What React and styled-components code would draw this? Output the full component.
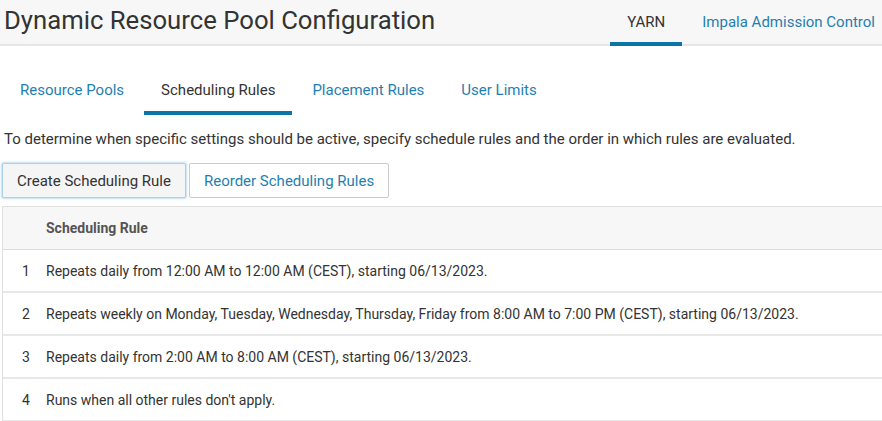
import React from 'react';
import styled, { createGlobalStyle } from 'styled-components';

const GlobalStyle = createGlobalStyle`
  body {
    margin: 0;
    background: #fff;
    font-family: Roboto, 'Liberation Sans', sans-serif;
    color: #333;
  }
`;

const blue = '#1f7fb0';
const accent = '#0c75a8';

const Page = styled.div`
  width: 882px;
  overflow: hidden;
`;

const Header = styled.header`
  display: flex;
  align-items: stretch;
  height: 44px;
  background: #f7f7f7;
  border-bottom: 2px solid #e6e6e6;
`;

const Title = styled.h1`
  flex: 1;
  margin: 0;
  padding-left: 4px;
  font-size: 25.7px;
  font-weight: 400;
  line-height: 40px;
  color: #333;
  white-space: nowrap;
`;

const TopNav = styled.nav`
  display: flex;
  align-items: stretch;
`;

const TopTab = styled.a`
  display: flex;
  align-items: center;
  padding: 2px 17px 0;
  margin-bottom: -2px;
  font-size: 15px;
  white-space: nowrap;
  color: ${p => (p.active ? '#333' : blue)};
  border-bottom: 4px solid ${p => (p.active ? accent : 'transparent')};
  &:last-child {
    padding: 2px 7px 0 20px;
  }
`;

const SubNav = styled.nav`
  display: flex;
  gap: 3px;
  padding-left: 3px;
`;

const SubTab = styled.a`
  padding: 34px 17px 11px;
  font-size: 15px;
  line-height: 20px;
  white-space: nowrap;
  color: ${p => (p.active ? '#333' : blue)};
  border-bottom: 4px solid ${p => (p.active ? accent : 'transparent')};
`;

const Intro = styled.p`
  margin: 14px 0 0 4px;
  font-size: 15px;
  line-height: 20px;
  color: #333;
`;

const Toolbar = styled.div`
  display: flex;
  gap: 3px;
  margin: 14px 0 0 2px;
`;

const Button = styled.button`
  height: 35px;
  padding: 0 14px;
  font-family: inherit;
  font-size: 15px;
  border-radius: 2px;
  cursor: pointer;
  color: ${p => (p.primary ? '#333' : blue)};
  background: ${p => (p.primary ? '#f5f5f5' : '#fff')};
  border: 1px solid ${p => (p.primary ? '#a9d2e8' : '#cccccc')};
  box-shadow: ${p => (p.primary ? '0 0 2px 1px rgba(120, 185, 220, 0.45)' : 'none')};
`;

const Table = styled.div`
  margin: 8px 0 0 2px;
  border-left: 1px solid #e0e0e0;
`;

const Row = styled.div`
  display: grid;
  grid-template-columns: 43px 1fr;
  align-items: center;
  height: 41px;
  border-bottom: 2px solid #e8e8e8;
  font-size: 14px;
  color: #333;
  white-space: nowrap;
`;

const HeadRow = styled(Row)`
  height: 42px;
  border-top: 1px solid #e0e0e0;
  background: #f7f7f7;
  border-bottom: 1px solid #dcdcdc;
  font-weight: 700;
  color: #555;
`;

const Num = styled.span`
  padding-left: 19px;
`;

const rules = [
  'Repeats daily from 12:00 AM to 12:00 AM (CEST), starting 06/13/2023.',
  'Repeats weekly on Monday, Tuesday, Wednesday, Thursday, Friday from 8:00 AM to 7:00 PM (CEST), starting 06/13/2023.',
  'Repeats daily from 2:00 AM to 8:00 AM (CEST), starting 06/13/2023.',
  "Runs when all other rules don't apply."
];

export default function App() {
  return (
    <Page>
      <GlobalStyle />
      <Header>
        <Title>Dynamic Resource Pool Configuration</Title>
        <TopNav>
          <TopTab active>YARN</TopTab>
          <TopTab>Impala Admission Control</TopTab>
        </TopNav>
      </Header>
      <SubNav>
        <SubTab>Resource Pools</SubTab>
        <SubTab active>Scheduling Rules</SubTab>
        <SubTab>Placement Rules</SubTab>
        <SubTab>User Limits</SubTab>
      </SubNav>
      <Intro>
        To determine when specific settings should be active, specify schedule rules and the
        order in which rules are evaluated.
      </Intro>
      <Toolbar>
        <Button primary>Create Scheduling Rule</Button>
        <Button>Reorder Scheduling Rules</Button>
      </Toolbar>
      <Table>
        <HeadRow>
          <span />
          <span>Scheduling Rule</span>
        </HeadRow>
        {rules.map((rule, i) => (
          <Row key={i}>
            <Num>{i + 1}</Num>
            <span>{rule}</span>
          </Row>
        ))}
      </Table>
    </Page>
  );
}
